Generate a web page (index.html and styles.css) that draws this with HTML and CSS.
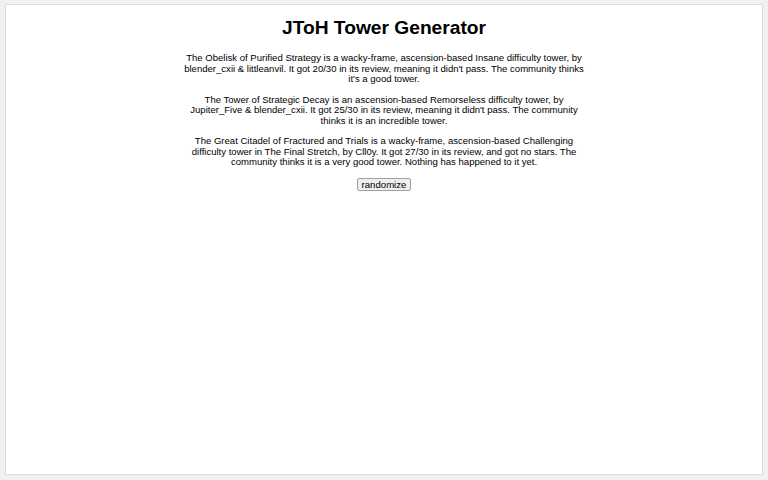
FILE: index.html
```html
<!DOCTYPE html>
<html lang="en">
<head>
    <meta charset="UTF-8">
    <meta name="viewport" content="width=device-width, initial-scale=1.0">
    <title>JToH Tower Generator</title>
    <link rel="stylesheet" href="styles.css">
</head>
<body>
    <div class="container">
        <h1>JToH Tower Generator</h1>

        <div id="towers">
            <p class="tower">The Obelisk of Purified Strategy is a wacky-frame, ascension-based Insane difficulty tower, by blender_cxii &amp; littleanvil. It got 20/30 in its review, meaning it didn't pass. The community thinks it's a good tower.</p>
            <p class="tower">The Tower of Strategic Decay is an ascension-based Remorseless difficulty tower, by Jupiter_Five &amp; blender_cxii. It got 25/30 in its review, meaning it didn't pass. The community thinks it is an incredible tower.</p>
            <p class="tower">The Great Citadel of Fractured and Trials is a wacky-frame, ascension-based Challenging difficulty tower in The Final Stretch, by Cll0y. It got 27/30 in its review, and got no stars. The community thinks it is a very good tower. Nothing has happened to it yet.</p>
        </div>

        <button class="button" id="randomize">randomize</button>
    </div>
</body>
</html>
```

FILE: styles.css
```css
:root {
    --background-color: #f1f1f1;
    --text-color: #000;
    --border-color: #dcdcdc;
}

body {
    font-family: 'Liberation Sans', Arial, sans-serif;
    margin: 4px 5px 5px;
    background-color: var(--background-color);
    color: var(--text-color);
}

.container {
    min-height: calc(100vh - 9px);
    box-sizing: border-box;
    background-color: #ffffff;
    border: 1px solid var(--border-color);
    text-align: center;
    padding-top: 12px;
}

h1 {
    font-size: 19.2px;
    margin: 0 0 14px;
}

.tower {
    max-width: 404px;
    margin: 0 auto 10px;
    font-size: 9.55px;
    line-height: 10.5px;
}

.button {
    display: block;
    margin: 0 auto;
    height: 13px;
    padding: 0 4px;
    font-family: inherit;
    font-size: 9.6px;
    line-height: 11px;
    background-color: #efefef;
    border: 1px solid #a0a0a0;
    border-radius: 2px;
    color: #000;
}
```
